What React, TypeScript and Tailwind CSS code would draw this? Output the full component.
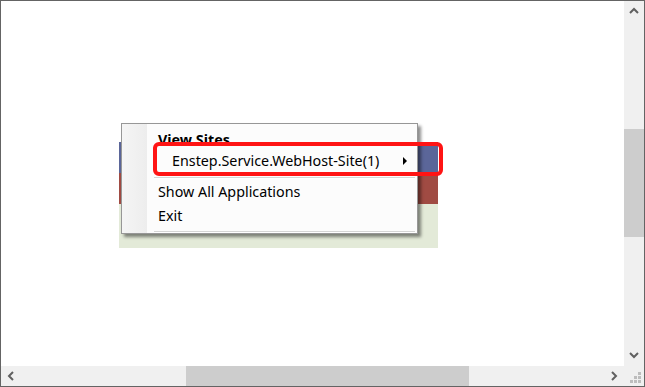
import { ReactNode } from 'react'

function Chevron({ dir }: { dir: 'up' | 'down' | 'left' | 'right' }) {
  const d = {
    up: 'M1 6 L5 2 L9 6',
    down: 'M1 2 L5 6 L9 2',
    left: 'M6 1 L2 5 L6 9',
    right: 'M2 1 L6 5 L2 9',
  }[dir]
  const vertical = dir === 'up' || dir === 'down'
  return (
    <svg width={vertical ? 10 : 8} height={vertical ? 8 : 10} viewBox={vertical ? '0 0 10 8' : '0 0 8 10'}>
      <path d={d} fill="none" stroke="#606060" strokeWidth="2" />
    </svg>
  )
}

function MenuRow({ children, indent = false, bold = false }: { children: ReactNode; indent?: boolean; bold?: boolean }) {
  return (
    <div className={`h-[24px] flex items-center ${indent ? 'pl-[50px]' : 'pl-[36px]'} ${bold ? 'font-bold' : ''}`}>
      {children}
    </div>
  )
}

function Separator() {
  return (
    <div className="ml-[32px] mr-[2px]">
      <div className="h-px bg-[#d5d5d5]" />
      <div className="h-px bg-white" />
    </div>
  )
}

export default function App() {
  return (
    <div className="w-[645px] h-[387px] border border-[#646464] bg-white flex flex-col overflow-hidden">
      <div className="flex flex-1 min-h-0">
        {/* page content */}
        <div className="relative flex-1 bg-white">
          {/* picture behind the tray menu */}
          <div className="ml-[118px] mt-[141px] w-[319px] h-[106px] flex flex-col">
            <div className="h-[31px] bg-[#5b6699]" />
            <div className="h-[31px] bg-[#a04b43]" />
            <div className="flex-1 bg-[#e3ead8]" />
          </div>

          {/* context menu */}
          <div
            className="absolute left-[120px] top-[122px] w-[297px] h-[111px] border border-[#979797] bg-[#fcfcfc] shadow-[3px_3px_3px_rgba(0,0,0,0.45)] text-[14.3px] text-black"
            style={{ fontFamily: '"Noto Sans", "Open Sans", sans-serif' }}
          >
            <div className="absolute left-0 top-0 bottom-0 w-[25px] bg-gradient-to-r from-[#f5f5f5] to-[#ededed]" />
            <div className="relative pt-[1px]">
              <div className="pt-[3px] h-[24px]">
                <MenuRow bold>View Sites</MenuRow>
              </div>
              <MenuRow indent>
                <span className="flex-1">Enstep.Service.WebHost-Site(1)</span>
                <span className="mr-[10px] w-0 h-0 border-y-[4px] border-y-transparent border-l-[4px] border-l-black" />
              </MenuRow>
              <div className="mt-[4px]">
                <Separator />
              </div>
              <div className="mt-[1px]">
                <MenuRow>Show All Applications</MenuRow>
                <MenuRow>Exit</MenuRow>
              </div>
              <div className="mt-[3px]">
                <Separator />
              </div>
            </div>
          </div>

          {/* red highlight */}
          <div className="absolute left-[152px] top-[141px] w-[290px] h-[34px] border-[4px] border-[#ff1414] rounded-[6px]" />
        </div>

        {/* vertical scrollbar */}
        <div className="w-[20px] bg-[#f0f0f0] flex flex-col items-center">
          <div className="h-[20px] flex items-center justify-center">
            <Chevron dir="up" />
          </div>
          <div className="flex-1 w-full flex flex-col">
            <div className="h-[108px]" />
            <div className="h-[108px] w-full bg-[#cdcdcd]" />
          </div>
          <div className="h-[22px] flex items-center justify-center">
            <Chevron dir="down" />
          </div>
        </div>
      </div>

      {/* horizontal scrollbar */}
      <div className="h-[20px] flex bg-[#f0f0f0]">
        <div className="w-[20px] flex items-center justify-center">
          <Chevron dir="left" />
        </div>
        <div className="flex-1 flex">
          <div className="w-[165px]" />
          <div className="w-[283px] bg-[#cdcdcd]" />
        </div>
        <div className="w-[20px] flex items-center justify-center">
          <Chevron dir="right" />
        </div>
        <div className="w-[20px] relative">
          <svg width="20" height="20" viewBox="0 0 20 20" className="absolute left-0 top-0">
            <g fill="#bdbdbd">
              <rect x="14" y="6" width="3" height="3" />
              <rect x="10" y="10" width="3" height="3" />
              <rect x="14" y="10" width="3" height="3" />
              <rect x="6" y="14" width="3" height="3" />
              <rect x="10" y="14" width="3" height="3" />
              <rect x="14" y="14" width="3" height="3" />
            </g>
          </svg>
        </div>
      </div>
    </div>
  )
}
